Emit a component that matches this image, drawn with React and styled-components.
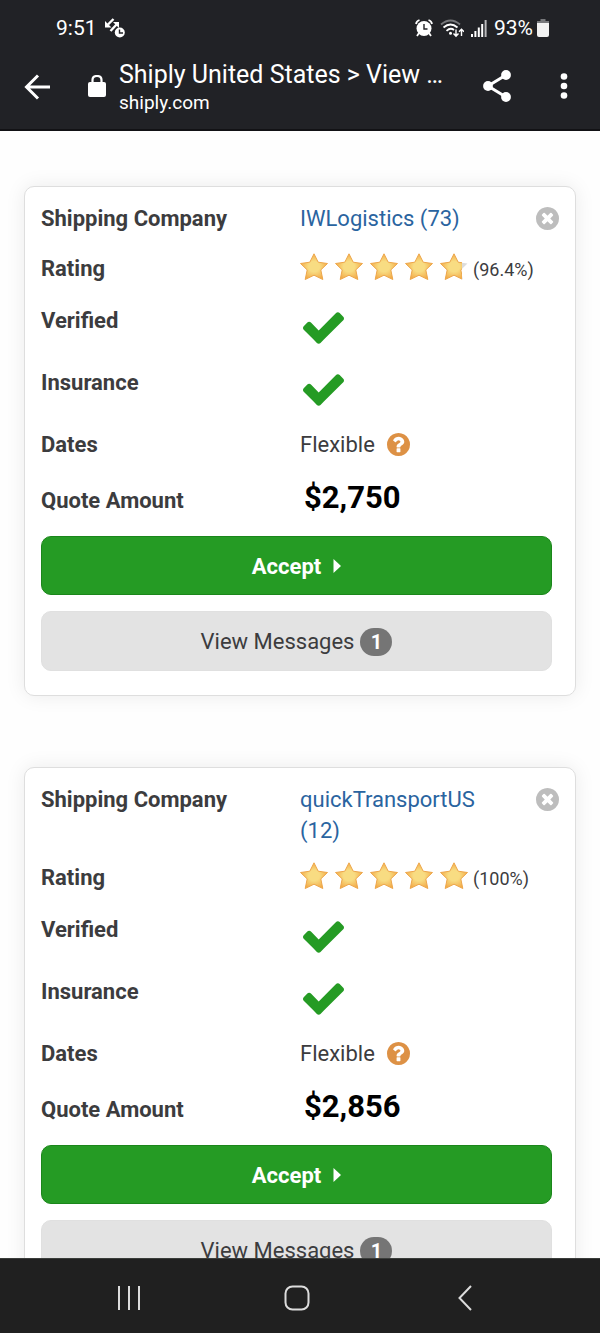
import React from 'react';
import styled, { createGlobalStyle } from 'styled-components';

const GlobalStyle = createGlobalStyle`
  body {
    margin: 0;
    background-color: #fefefe;
    font-family: Roboto, "Liberation Sans", sans-serif;
    color: #3c3c3e;
  }
  button {
    font-family: inherit;
    border: none;
    padding: 0;
    background: none;
    cursor: pointer;
  }
  svg {
    display: block;
    flex-shrink: 0;
  }
`;

const Phone = styled.div`
  display: flex;
  flex-direction: column;
  height: 100vh;
`;

const TopBar = styled.header`
  background-color: #212226;
  border-bottom: 2px solid #121215;
  color: #fff;
`;

const StatusBar = styled.div`
  display: flex;
  align-items: center;
  justify-content: space-between;
  height: 32px;
  padding: 12px 51px 0 56px;
  font-size: 21px;
  line-height: 32px;
`;

const StatusGroup = styled.div`
  display: flex;
  align-items: center;
  gap: ${props => props.$gap}px;
`;

const Battery = styled.div`
  display: flex;
  align-items: center;
  gap: 4px;
`;

const AddressBar = styled.div`
  display: flex;
  align-items: center;
  height: 85px;
  padding: 0 24px;
`;

const BarButton = styled.button`
  color: #fff;
  margin-right: ${props => props.$after || 0}px;
`;

const PageInfo = styled.div`
  flex: 1;
  min-width: 0;
  margin-left: 13px;
`;

const PageTitle = styled.div`
  font-size: 25px;
  line-height: 32px;
  white-space: nowrap;
  overflow: hidden;
  text-overflow: ellipsis;
`;

const PageHost = styled.div`
  font-size: 19px;
  line-height: 24px;
`;

const Quotes = styled.main`
  display: flex;
  flex-direction: column;
  flex: 1;
  min-height: 0;
  gap: 71px;
  padding: 55px 24px 0;
  overflow: auto;
  scrollbar-width: none;
`;

const Card = styled.section`
  flex-shrink: 0;
  background-color: #fff;
  border: 1px solid #dedede;
  border-radius: 10px;
  box-shadow: 0 0 20px 0 rgba(0, 0, 0, 0.08);
`;

const Details = styled.dl`
  margin: 0;
`;

const Row = styled.div`
  display: grid;
  grid-template-columns: 1fr 1fr;
  align-items: ${props => props.$align || 'start'};
  min-height: ${props => props.$height || 31}px;
  padding: 16px 16px 0;
  font-size: 22px;
  line-height: 31px;
`;

const Label = styled.dt`
  font-weight: 700;
`;

const Value = styled.dd`
  display: flex;
  justify-content: ${props => (props.$spread ? 'space-between' : 'flex-start')};
  align-items: ${props => (props.$spread ? 'flex-start' : 'center')};
  gap: ${props => props.$gap || 0}px;
  margin: 0;
`;

const CompanyLink = styled.a`
  color: #2a64a0;
  text-decoration: none;
`;

const RoundButton = styled.button`
  color: ${props => props.$color};
  margin-top: ${props => props.$top || 0}px;
`;

const Stars = styled.div`
  display: flex;
  gap: 7px;
  padding-bottom: 5px;
`;

const Percent = styled.span`
  font-size: 18px;
`;

const CheckBox = styled.div`
  padding: 7px 3px 0;
`;

const Amount = styled.strong`
  padding-left: 4px;
  color: #000;
  font-size: 31px;
  font-weight: 700;
  line-height: 44px;
`;

const Actions = styled.div`
  display: flex;
  flex-direction: column;
  gap: 16px;
  padding: 16px 23px 24px 16px;
`;

const ActionButton = styled.button`
  display: flex;
  align-items: center;
  justify-content: center;
  gap: ${props => (props.$primary ? 12 : 6)}px;
  box-sizing: border-box;
  height: ${props => (props.$primary ? 59 : 60)}px;
  && {
    padding-top: 1px;
    border: 1px solid ${props => (props.$primary ? '#1b861b' : '#e0e0e0')};
    border-radius: 10px;
    background-color: ${props => (props.$primary ? '#259b24' : '#e3e3e3')};
  }
  color: ${props => (props.$primary ? '#fff' : '#3c3c3e')};
  font-size: 22px;
  font-weight: ${props => (props.$primary ? 700 : 400)};
`;

const Count = styled.span`
  min-width: 32px;
  border-radius: 14px;
  background-color: #757575;
  color: #fff;
  font-size: 20px;
  font-weight: 700;
  line-height: 28px;
`;

const NavBar = styled.nav`
  display: grid;
  grid-template-columns: 1fr 1fr 1fr;
  box-sizing: border-box;
  height: 75px;
  padding: 3px 51px 0 45px;
  border-top: 1px solid #3a3d3a;
  background-color: #202020;
`;

const NavButton = styled.button`
  display: flex;
  align-items: center;
  justify-content: center;
  color: #dcdcdc;
`;

const SyncIcon = () => (
  <svg width="20" height="20" viewBox="0 0 20 20" fill="none" stroke="#fff" strokeWidth="2.400">
    <path d="M8.500 1L3 6.500M5.500 13L12.500 5.500" />
    <path d="M0 3V9.500H6.500ZM8 4H14V10Z" fill="#fff" stroke="none" />
    <circle cx="14.800" cy="14.500" r="5" fill="#fff" stroke="none" />
    <path d="M14.500 11.500V15H18" stroke="#212226" strokeWidth="1.400" />
  </svg>
);

const AlarmIcon = () => (
  <svg width="18" height="18" viewBox="0 0 18 18" fill="none" stroke="#fff" strokeWidth="1.800">
    <circle cx="9" cy="9.500" r="7.500" fill="#fff" stroke="none" />
    <path d="M1 5Q1.500 2 4.500 1M17 5Q16.500 2 13.500 1M4 14L2 17M14 14L16 17" />
    <path d="M9 5V10H12.500" stroke="#212226" strokeWidth="1.400" />
  </svg>
);

const WifiIcon = () => (
  <svg width="24" height="19" viewBox="0 0 24 19" fill="none" stroke="#fff" strokeWidth="1.800">
    <path d="M1 5.500Q10.500 -2.500 20 5.500" stroke="#77787b" />
    <path d="M3.500 8.500Q10.500 2.500 17.500 8.500M6.500 11.800Q10.500 8.200 14 11" />
    <circle cx="10.500" cy="14.300" r="1.500" fill="#fff" stroke="none" />
    <path d="M16 10.500V17M13.500 14.500L16 17.200L18.500 14.500M21.500 17V10.500M19 12.800L21.500 10.200L24 12.800" strokeWidth="1.400" />
  </svg>
);

const SignalIcon = () => (
  <svg width="16" height="17" viewBox="0 0 16 17" fill="#fff">
    <path d="M0 14h2v3H0zM3.400 11h2v6h-2zM6.800 7.500h2V17h-2zM10.200 4h2v13h-2z" />
    <path d="M13.600 0h2v17h-2z" fill="#b9b9bb" />
  </svg>
);

const BatteryIcon = () => (
  <svg width="12" height="19" viewBox="0 0 12 19">
    <path d="M3.500 0h5v2H12v3H0V2h3.500z" fill="#77787b" />
    <path d="M0 4h12v12q0 2-2 2H2q-2 0-2-2z" fill="#f2f2f2" />
  </svg>
);

const BackArrowIcon = () => (
  <svg width="26" height="26" viewBox="0 0 26 26" fill="none" stroke="currentColor" strokeWidth="3">
    <path d="M14 1.500L2.500 13L14 24.500M3 13H26" />
  </svg>
);

const LockIcon = () => (
  <svg width="18" height="24" viewBox="0 0 18 24" fill="none">
    <rect y="7" width="18" height="15" rx="2" fill="#fff" />
    <path d="M4.500 8V5Q4.500 1 9 1T13.500 5V8" stroke="#fff" strokeWidth="2.200" />
  </svg>
);

const ShareIcon = () => (
  <svg width="28" height="34" viewBox="0 0 28 34" fill="currentColor">
    <path d="M23 5L5 16L23 27" fill="none" stroke="currentColor" strokeWidth="3" />
    <circle cx="23" cy="5" r="4.900" />
    <circle cx="5" cy="16" r="4.900" />
    <circle cx="23" cy="27" r="4.900" />
  </svg>
);

const MoreIcon = () => (
  <svg width="8" height="28" viewBox="0 0 8 28" fill="currentColor">
    <circle cx="4" cy="3.500" r="3.300" />
    <circle cx="4" cy="13" r="3.300" />
    <circle cx="4" cy="22.500" r="3.300" />
  </svg>
);

const CloseIcon = () => (
  <svg width="23" height="23" viewBox="128 128 1536 1536" fill="currentColor">
    <path d="M1277 1122q0-26-19-45l-181-181 181-181q19-19 19-45 0-27-19-46l-90-90q-19-19-46-19-26 0-45 19l-181 181-181-181q-19-19-45-19-27 0-46 19l-90 90q-19 19-19 46 0 26 19 45l181 181-181 181q-19 19-19 45 0 27 19 46l90 90q19 19 46 19 26 0 45-19l181-181 181 181q19 19 45 19 27 0 46-19l90-90q19-19 19-46zm387-226q0 209-103 385.500t-279.500 279.500-385.500 103-385.500-103-279.500-279.500-103-385.500 103-385.500 279.500-279.500 385.500-103 385.500 103 279.500 279.500 103 385.500z" />
  </svg>
);

const HelpIcon = () => (
  <svg width="23" height="23" viewBox="128 128 1536 1536" fill="currentColor">
    <path d="M1024 1376v-192q0-14-9-23t-23-9h-192q-14 0-23 9t-9 23v192q0 14 9 23t23 9h192q14 0 23-9t9-23zm256-672q0-88-55.500-163t-138.500-116-170-41q-243 0-371 213-15 24 8 42l132 100q7 6 19 6 16 0 25-12 53-68 86-92 34-24 86-24 48 0 85.500 26t37.500 59q0 38-20 61t-68 45q-63 28-115.500 86.500t-52.500 125.500v36q0 14 9 23t23 9h192q14 0 23-9t9-23q0-19 21.500-49.500t54.500-49.500q32-18 49-28.500t46-35 44.500-48 28-60.500 12.500-81zm384 192q0 209-103 385.500t-279.500 279.500-385.500 103-385.500-103-279.500-279.500-103-385.500 103-385.500 279.500-279.500 385.500-103 385.500 103 279.500 279.500 103 385.500z" />
  </svg>
);

const CheckIcon = () => (
  <svg width="41" height="32" viewBox="121 334 1550 1188" fill="#259b24" role="img" aria-label="Yes">
    <path d="M1671 566q0 40-28 68l-724 724-136 136q-28 28-68 28t-68-28l-136-136-362-362q-28-28-28-68t28-68l136-136q28-28 68-28t68 28l294 295 656-657q28-28 68-28t68 28l136 136q28 28 28 68z" />
  </svg>
);

const starPath = "M14 0.800L18.200 9.200L27.500 10.500L20.800 16.900L22.800 26.500L14 22.200L5.200 26.500L7.200 16.900L0.500 10.500L9.800 9.200Z";

const StarIcon = ({ id, width }) => (
  <svg width="28" height="28" viewBox="0 0 28 28">
    <defs>
      <radialGradient id={`${id}-glow`}>
        <stop offset="0.400" stopColor="#f8dc82" />
        <stop offset="1" stopColor="#f3ae4c" />
      </radialGradient>
      <clipPath id={`${id}-clip`}>
        <rect width={width} height="28" />
      </clipPath>
    </defs>
    {width < 28 && <path d={starPath} fill="#dcdcdc" />}
    <path d={starPath} fill={`url(#${id}-glow)`} stroke="#eda64a" strokeLinejoin="round" clipPath={`url(#${id}-clip)`} />
  </svg>
);

const CaretIcon = () => (
  <svg width="8" height="14" viewBox="0 0 8 14" fill="currentColor">
    <path d="M0.500 0L8 7L0.500 14Z" />
  </svg>
);

class QuoteCard extends React.Component {

    stars() {
      const returnValue = [];
      // the strip is 168px wide, a star starts every 35px
      const filled = 168 * this.props.rating / 100;
      for (let i = 0; i < 5; i++) {
        const width = Math.min(28, Math.max(0, filled - i * 35));
        returnValue.push(<StarIcon key={i} id={`${this.props.id}-star${i}`} width={width} />);
      }
      return returnValue;
    }

    render() {
        return (
            <Card>
                <Details>
                  <Row $height={34}>
                    <Label>Shipping Company</Label>
                    <Value $spread $gap={24}>
                      <CompanyLink href="#company">{this.props.company} ({this.props.reviews})</CompanyLink>
                      <RoundButton $color="#bdbdbd" $top={4} aria-label="Remove quote"><CloseIcon /></RoundButton>
                    </Value>
                  </Row>
                  <Row $height={36}>
                    <Label>Rating</Label>
                    <Value $gap={5}>
                      <Stars>{this.stars()}</Stars>
                      <Percent>({this.props.rating}%)</Percent>
                    </Value>
                  </Row>
                  <Row $height={46}>
                    <Label>Verified</Label>
                    <Value><CheckBox><CheckIcon /></CheckBox></Value>
                  </Row>
                  <Row $height={46}>
                    <Label>Insurance</Label>
                    <Value><CheckBox><CheckIcon /></CheckBox></Value>
                  </Row>
                  <Row>
                    <Label>Dates</Label>
                    <Value $gap={12}>
                      {this.props.dates}
                      <RoundButton $color="#dd9145" aria-label="About dates"><HelpIcon /></RoundButton>
                    </Value>
                  </Row>
                  <Row $align="baseline">
                    <Label>Quote Amount</Label>
                    <Value><Amount>{this.props.amount}</Amount></Value>
                  </Row>
                </Details>
                <Actions>
                  <ActionButton $primary>Accept <CaretIcon /></ActionButton>
                  <ActionButton>View Messages <Count>{this.props.messages}</Count></ActionButton>
                </Actions>
            </Card>
        );
    }
}

const App = () => (
  <Phone>
    <GlobalStyle />
    <TopBar>
      <StatusBar>
        <StatusGroup $gap={8}>9:51 <SyncIcon /></StatusGroup>
        <StatusGroup $gap={7}>
          <AlarmIcon />
          <WifiIcon />
          <SignalIcon />
          <Battery>93% <BatteryIcon /></Battery>
        </StatusGroup>
      </StatusBar>
      <AddressBar>
        <BarButton $after={38} aria-label="Back"><BackArrowIcon /></BarButton>
        <LockIcon />
        <PageInfo>
          <PageTitle>Shiply United States &gt; View …</PageTitle>
          <PageHost>shiply.com</PageHost>
        </PageInfo>
        <BarButton $after={49} aria-label="Share"><ShareIcon /></BarButton>
        <BarButton $after={8} aria-label="More"><MoreIcon /></BarButton>
      </AddressBar>
    </TopBar>
    <Quotes>
      <QuoteCard id="q1" company="IWLogistics" reviews={73} rating={96.4} amount="$2,750" dates="Flexible" messages={1} />
      <QuoteCard id="q2" company="quickTransportUS" reviews={12} rating={100} amount="$2,856" dates="Flexible" messages={1} />
    </Quotes>
    <NavBar>
      <NavButton aria-label="Recent apps">
        <svg width="24" height="26" viewBox="0 0 24 26" stroke="currentColor" strokeWidth="2">
          <path d="M2 1V25M12 1V25M22 1V25" />
        </svg>
      </NavButton>
      <NavButton aria-label="Home">
        <svg width="26" height="26" viewBox="0 0 26 26" fill="none" stroke="currentColor" strokeWidth="2">
          <rect x="1.500" y="1.500" width="23" height="23" rx="7" />
        </svg>
      </NavButton>
      <NavButton aria-label="Back">
        <svg width="14" height="26" viewBox="0 0 14 26" fill="none" stroke="currentColor" strokeWidth="2">
          <path d="M13 1L1.500 13L13 25" />
        </svg>
      </NavButton>
    </NavBar>
  </Phone>
);

export default App;
